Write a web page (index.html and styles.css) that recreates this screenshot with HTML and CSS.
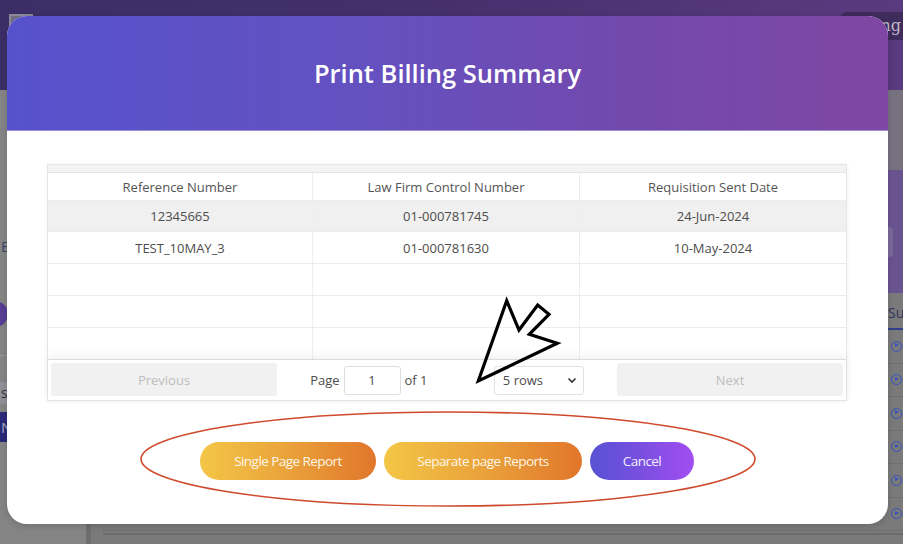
FILE: index.html
```html
<!DOCTYPE html>
<html>
<head>
<meta charset="utf-8">
<link rel="stylesheet" href="styles.css">
</head>
<body>
<div class="page">
  <div class="topbar">
    <div class="logo"></div>
    <div class="tb-btn">Billing</div>
  </div>
  <div class="below">
    <div class="sidebar">
      <div class="sb-text">E</div>
      <div class="sb-circle"></div>
      <div class="sb-dash"></div>
      <div class="sb-light">s</div>
      <div class="sb-navy">N</div>
    </div>
    <div class="sb-border"></div>
    <div class="main">
      <div class="m-head"></div>
      <div class="m-panel"><div class="m-input"></div></div>
      <div class="m-table">
        <div class="m-th"><span>Sub</span></div>
        <div class="m-tr"><span class="play"></span></div>
        <div class="m-tr"><span class="play"></span></div>
        <div class="m-tr"><span class="play"></span></div>
        <div class="m-tr"><span class="play"></span></div>
        <div class="m-tr"><span class="play"></span></div>
        <div class="m-tr"><span class="play"></span></div>
      </div>
    </div>
  </div>
</div>

<div class="modal">
  <div class="modal-head"><h1>Print Billing Summary</h1></div>
  <div class="modal-body">
    <div class="rt">
      <div class="rt-top"></div>
      <div class="rt-row rt-head"><div>Reference Number</div><div>Law Firm Control Number</div><div>Requisition Sent Date</div></div>
      <div class="rt-row odd h31"><div>12345665</div><div>01-000781745</div><div>24-Jun-2024</div></div>
      <div class="rt-row"><div>TEST_10MAY_3</div><div>01-000781630</div><div>10-May-2024</div></div>
      <div class="rt-row"><div></div><div></div><div></div></div>
      <div class="rt-row"><div></div><div></div><div></div></div>
      <div class="rt-row h31 last"><div></div><div></div><div></div></div>
      <div class="rt-pag">
        <button class="pbtn">Previous</button>
        <div class="pcenter">
          <span class="pinfo">Page <span class="pinput">1</span> of 1</span>
          <span class="psel">5 rows <svg width="10" height="7" viewBox="0 0 10 7"><path d="M1.5 1.5 L5 5 L8.5 1.5" fill="none" stroke="#333" stroke-width="1.6"/></svg></span>
        </div>
        <button class="pbtn">Next</button>
      </div>
    </div>
    <div class="actions">
      <button class="btn btn-orange b1">Single Page Report</button>
      <button class="btn btn-orange b2">Separate page Reports</button>
      <button class="btn btn-purple">Cancel</button>
    </div>
  </div>
  <svg class="ellipse" width="881" height="508" viewBox="0 0 881 508">
    <ellipse cx="441" cy="443" rx="307" ry="47" fill="none" stroke="#cf4a2c" stroke-width="1.6"/>
  </svg>
  <svg class="arrow" width="881" height="508" viewBox="0 0 881 508">
    <polygon points="471.3,365 499.7,284.7 512,314 530.7,289 542,298.3 522.3,318.3 550.3,327.3" fill="none" stroke="#000" stroke-width="3.2" stroke-linejoin="miter"/>
  </svg>
</div>
</body>
</html>
```

FILE: styles.css
```css
* { box-sizing: border-box; }
html, body { margin: 0; padding: 0; }
body {
  width: 903px;
  height: 544px;
  overflow: hidden;
  position: relative;
  background: #7a7a7a;
  font-family: "Open Sans", "DejaVu Sans", sans-serif;
}

/* background page (dimmed) */
.page { display: flex; flex-direction: column; height: 544px; }
.topbar {
  height: 90px;
  flex: none;
  background: linear-gradient(90deg, #3b2e66 0%, #45306c 50%, #55377a 85%, #5a3a7e 100%);
  display: flex;
  justify-content: space-between;
  align-items: flex-start;
  padding: 14px 0 0 9px;
}
.logo { width: 24px; height: 58px; background: #6f6c86; border: 2px solid #8a8a98; }
.tb-btn {
  margin-top: -2px;
  width: 63px;
  height: 28px;
  background: #3d2c5c;
  border-radius: 7px 0 0 7px;
  color: #bdb6c9;
  font-family: "DejaVu Serif", serif;
  font-size: 16px;
  line-height: 28px;
  text-align: right;
  padding-right: 2px;
  white-space: nowrap;
}
.below { flex: 1; display: flex; }
.sidebar {
  width: 105px;
  background: #848484;
  display: flex;
  flex-direction: column;
  padding-top: 146px;
}
.sb-text { color: #3e4a6a; font-size: 15px; padding-left: 1px; height: 20px; line-height: 20px; }
.sb-circle { width: 26px; height: 26px; border-radius: 50%; background: #573d93; margin: 45px 0 0 -18px; }
.sb-dash { border-top: 1px dashed #9a9a9a; margin-top: 28px; }
.sb-light { margin-top: 26px; height: 22px; background: #8f8f99; color: #333; font-size: 14px; padding-left: 1px; line-height: 22px; }
.sb-navy { margin-top: 8px; height: 30px; background: #2b2a78; color: #aab; font-size: 15px; line-height: 30px; padding-left: 1px; }
.sb-border { width: 6px; background: #6e6e6e; }
.main { flex: 1; display: flex; flex-direction: column; padding-left: 12px; }
.m-head { height: 80px; background: #777280; }
.m-panel { height: 123px; background: #6a5490; display: flex; justify-content: flex-end; padding-top: 57px; }
.m-input { width: 790px; height: 30px; background: #7a6a9c; border-radius: 4px; margin-right: 10px; }
.m-table { background: #7a7a7a; border-bottom: 2px solid #6b6b6b; height: 242px; }
.m-th {
  height: 37px;
  display: flex;
  justify-content: flex-end;
  align-items: center;
  border-bottom: 2px solid #2f3f8c;
  padding-top: 3px;
}
.m-th span { width: 15px; overflow: hidden; color: #30355a; font-size: 14px; white-space: nowrap; }
.m-tr {
  height: 33.5px;
  display: flex;
  justify-content: flex-end;
  align-items: center;
  border-bottom: 1px solid #6f6f6f;
  padding-right: 0;
}
.play {
  width: 11px;
  height: 11px;
  border: 1.5px solid #3550c0;
  border-radius: 50%;
  margin-right: 1px;
  position: relative;
}
.play::after {
  content: "";
  position: absolute;
  left: 3px;
  top: 1.5px;
  border-left: 4px solid #3550c0;
  border-top: 2.5px solid transparent;
  border-bottom: 2.5px solid transparent;
}

/* modal */
.modal {
  position: absolute;
  left: 7px;
  top: 16px;
  width: 881px;
  height: 508px;
  background: #fff;
  border-radius: 20px;
  box-shadow: 0 2px 6px rgba(0,0,0,0.15);
}
.modal-head {
  height: 115px;
  border-radius: 20px 20px 0 0;
  background: linear-gradient(90deg, #5652cd 0%, #6451c0 40%, #7349ad 70%, #7f47a3 100%);
  border-bottom: 1px solid #9d8fd8;
  display: flex;
  align-items: center;
  justify-content: center;
}
.modal-head h1 {
  margin: 0;
  color: #fff;
  font-size: 25.5px;
  font-weight: 600;
  letter-spacing: 0;
}
.modal-body { padding: 33px 41px 0 40px; }

.rt {
  border: 1px solid #e6e6e6;
  box-shadow: 0 0 6px rgba(0,0,0,0.05);
  color: #4d4d4d;
  font-size: 13px;
}
.rt-top { height: 8px; background: #f3f3f3; border-bottom: 1px solid #e4e4e4; }
.rt-row {
  display: grid;
  grid-template-columns: 265px 267px 1fr;
  height: 32px;
  border-bottom: 1px solid #ececec;
}
.rt-row.h31 { height: 31px; }
.rt-row.last { border-bottom: none; }
.rt-row > div {
  display: flex;
  align-items: center;
  justify-content: center;
  border-right: 1px solid #eeeeee;
}
.rt-row > div:last-child { border-right: none; }
.rt-head { height: 28px; color: #555; }
.rt-row.odd { background: #f0f0f0; }
.rt-pag {
  display: flex;
  height: 41px;
  padding: 3px;
  border-top: 1px solid #dcdcdc;
  box-shadow: 0 -3px 10px rgba(0,0,0,0.06);
  position: relative;
}
.pbtn {
  flex: 226px 0 0;
  width: 226px;
  height: 33px;
  border: none;
  border-radius: 3px;
  background: #f1f1f1;
  color: #bdbdbd;
  font-family: "Open Sans", sans-serif;
  font-size: 13px;
}
.pcenter {
  flex: 1;
  display: flex;
  justify-content: space-around;
  align-items: center;
  color: #4d4d4d;
}
.pinfo { display: flex; align-items: center; gap: 0; }
.pinput {
  display: inline-flex;
  align-items: center;
  justify-content: center;
  width: 57px;
  height: 29px;
  border: 1px solid #dddddd;
  border-radius: 3px;
  margin: 0 4px 0 4px;
  background: #fff;
}
.psel {
  width: 90px;
  height: 29px;
  border: 1px solid #e3e3e3;
  border-radius: 3px;
  display: flex;
  align-items: center;
  justify-content: space-between;
  padding: 0 6px 0 8px;
  background: #fff;
}

.actions {
  margin-top: 41px;
  display: flex;
  justify-content: center;
  gap: 8px;
}
.btn {
  height: 38px;
  border: none;
  border-radius: 19px;
  color: #fff7e8;
  font-family: "Open Sans", sans-serif;
  font-size: 13.5px;
  letter-spacing: -0.55px;
  padding: 0;
}
.btn-orange { background: linear-gradient(90deg, #f3c646 0%, #eaa23b 50%, #e1762b 100%); }
.b1 { width: 176px; }
.b2 { width: 198px; }
.btn-purple { width: 104px; background: linear-gradient(90deg, #5752d4 0%, #7a4fe0 50%, #a24ef0 100%); color: #f3efff; }

.ellipse, .arrow {
  position: absolute;
  left: 0;
  top: 0;
  pointer-events: none;
}
```
